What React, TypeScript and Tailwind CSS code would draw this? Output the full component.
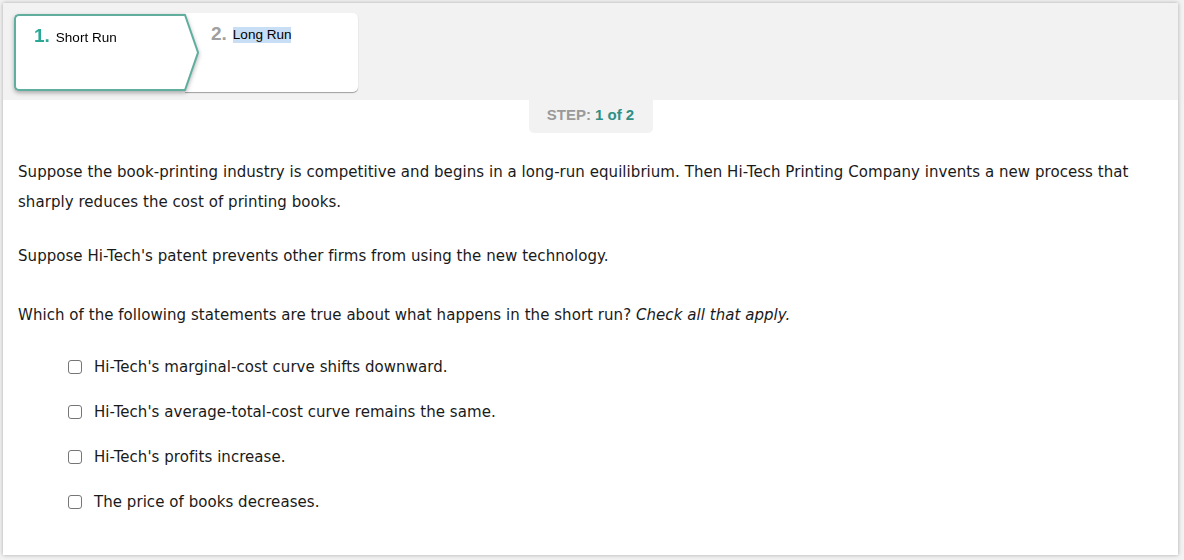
import React from "react";

const body = { fontFamily: '"DejaVu Sans", Verdana, sans-serif' };
const arial = { fontFamily: '"Liberation Sans", Arial, sans-serif' };

const options = [
  "Hi-Tech's marginal-cost curve shifts downward.",
  "Hi-Tech's average-total-cost curve remains the same.",
  "Hi-Tech's profits increase.",
  "The price of books decreases.",
];

export default function App() {
  return (
    <div className="w-[1184px] h-[560px] bg-[#f2f2f2] overflow-hidden pt-[3px] pl-[3px]">
      <div className="w-[1175px] h-[552px] bg-white shadow-[0_0_4px_rgba(0,0,0,0.3)] flex flex-col">
        {/* header */}
        <div className="h-[97px] bg-[#f2f2f2] pl-[11px] pt-[10px] flex items-start" style={arial}>
          <div className="relative z-10 flex h-[77px] mt-[1px] drop-shadow-[0_2px_2px_rgba(0,0,0,0.3)]">
            <div className="w-[170px] h-full bg-white border-l-2 border-t-2 border-b-2 border-[#5fae9e] rounded-l-[5px] flex items-start pt-[8px] pl-[18px]">
              <span className="text-[19px] font-bold text-[#2aa896] leading-[24px]">1.</span>
              <span className="text-[13.5px] text-black ml-[6px] leading-[24px] mt-[2px]">Short Run</span>
            </div>
            <svg width="15" height="77" viewBox="0 0 15 77" className="block">
              <polygon points="0,1 1,1 14,38.5 1,76 0,76" fill="white" />
              <polyline points="0,1 1,1 14,38.5 1,76 0,76" fill="none" stroke="#5fae9e" strokeWidth="2" />
            </svg>
          </div>
          <div className="-ml-[14px] w-[173px] h-[79px] bg-white rounded-r-[5px] shadow-[0_1px_1px_rgba(0,0,0,0.35)] pl-[26px] pt-[9px] flex items-start">
            <span className="text-[19px] font-bold text-[#a0a0a0] leading-[24px]">2.</span>
            <span className="text-[13.5px] text-black ml-[6px] leading-[16px] mt-[5px] bg-[#c8def5]">Long Run</span>
          </div>
        </div>
        {/* step */}
        <div className="flex justify-center">
          <div className="w-[124px] h-[33px] bg-[#f2f2f2] rounded-b-[5px] flex items-center justify-center text-[15px] font-bold pb-[3px]" style={arial}>
            <span className="text-[#9a9a9a]">STEP:</span>
            <span className="text-[#2e8f86] ml-[4px]">1 of 2</span>
          </div>
        </div>
        {/* content */}
        <div className="pl-[15px] pt-[24px] text-[15px] tracking-[0.05px] text-[#1a1a1a] leading-[30px]" style={body}>
          <p>
            Suppose the book-printing industry is competitive and begins in a long-run equilibrium. Then Hi-Tech Printing Company invents a new process that sharply reduces the cost of printing books.
          </p>
          <p className="mt-[24px]">Suppose Hi-Tech's patent prevents other firms from using the new technology.</p>
          <p className="mt-[29px]">
            Which of the following statements are true about what happens in the short run? <i>Check all that apply.</i>
          </p>
          <div className="mt-[22px] pl-[50px] flex flex-col gap-[15px]">
            {options.map((o) => (
              <label key={o} className="flex items-center h-[30px]">
                <span className="w-[14px] h-[14px] border border-[#767676] rounded-[3px] bg-white mr-[12px]" />
                <span>{o}</span>
              </label>
            ))}
          </div>
        </div>
      </div>
    </div>
  );
}
